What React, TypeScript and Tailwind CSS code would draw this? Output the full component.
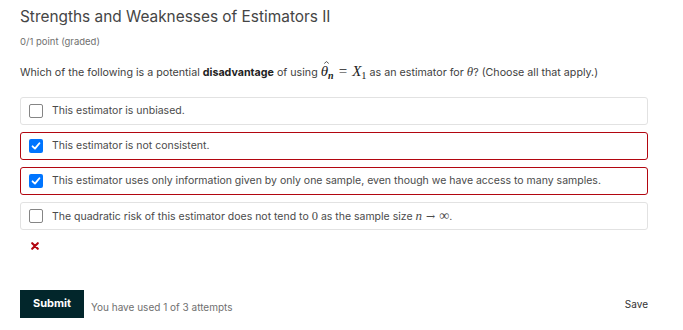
import React from "react";

type Option = {
  id: string;
  checked: boolean;
  label: React.ReactNode;
};

const serif = "font-['Liberation_Serif',serif]";

function Checkbox({ checked }: { checked: boolean }) {
  if (checked) {
    return (
      <span className="flex h-[14px] w-[14px] shrink-0 items-center justify-center rounded-[2px] bg-[#0075ff]">
        <svg viewBox="0 0 14 14" className="h-[12px] w-[12px]">
          <path
            d="M3 7.4 L5.8 10 L11 3.8"
            fill="none"
            stroke="#fff"
            strokeWidth="2.2"
            strokeLinecap="round"
            strokeLinejoin="round"
          />
        </svg>
      </span>
    );
  }
  return (
    <span className="h-[14px] w-[14px] shrink-0 rounded-[2px] border border-[#858585] bg-white" />
  );
}

const options: Option[] = [
  { id: "a", checked: false, label: "This estimator is unbiased." },
  { id: "b", checked: true, label: "This estimator is not consistent." },
  {
    id: "c",
    checked: true,
    label:
      "This estimator uses only information given by only one sample, even though we have access to many samples.",
  },
  {
    id: "d",
    checked: false,
    label: (
      <>
        The quadratic risk of this estimator does not tend to{" "}
        <span className={`${serif} text-[12.5px]`}>0</span> as the sample size{" "}
        <span className={`${serif} text-[13px] italic`}>n</span>
        <span className="mx-[4px] font-['DejaVu_Serif',serif] text-[11px]">→</span>
        <span className={`${serif} text-[14px]`}>∞</span>.
      </>
    ),
  },
];

function Estimator() {
  return (
    <span className={`${serif} text-[15px] leading-[14px] text-[#222]`}>
      <span className="relative inline-block italic">
        θ
        {/* hat accent */}
        <svg
          viewBox="0 0 6 3"
          className="absolute left-[3px] top-[-3px] h-[3px] w-[5px]"
        >
          <path d="M0.3 2.7 L3 0.4 L5.7 2.7" fill="none" stroke="#222" strokeWidth="0.9" />
        </svg>
      </span>
      <sub className="text-[10px] italic font-bold">n</sub>
      <span className="mx-[5px]">=</span>
      <span className="italic">X</span>
      <sub className="text-[10.5px]">1</sub>
    </span>
  );
}

export default function App() {
  return (
    <div className="min-h-[330px] bg-white font-['Inter',sans-serif]">
      <div className="w-[628px] ml-[20px] pt-[8px]">
        <h2 className="text-[15.4px] leading-[18px] font-normal text-[#454545]">
          Strengths and Weaknesses of Estimators II
        </h2>
        <div className="mt-[10px] text-[9.5px] leading-[12px] text-[#707070]">
          0/1 point (graded)
        </div>

        <p className="mt-[16px] text-[10.7px] leading-[16px] text-[#414141]">
          Which of the following is a potential{" "}
          <strong className="font-bold text-[#222]">disadvantage</strong> of
          using <Estimator /> as an estimator for{" "}
          <span className={`${serif} text-[13px] italic`}>θ</span>? (Choose all
          that apply.)
        </p>

        <div className="mt-[16px] flex flex-col gap-[7px]">
          {options.map((opt) => (
            <label
              key={opt.id}
              className={`flex h-[28px] items-center gap-[9px] rounded-[3px] border pl-[8px] ${
                opt.checked ? "border-[#b20610]" : "border-[#e2e2e2]"
              }`}
            >
              <Checkbox checked={opt.checked} />
              <span className="text-[10.5px] leading-[14px] text-[#4a4a4a]">
                {opt.label}
              </span>
            </label>
          ))}
        </div>

        <div className="mt-[12px] pl-[11px]">
          <svg viewBox="0 0 10 10" className="h-[8px] w-[8px]">
            <path
              d="M1.5 1.5 L8.5 8.5 M8.5 1.5 L1.5 8.5"
              stroke="#b20610"
              strokeWidth="2.6"
              strokeLinecap="round"
            />
          </svg>
        </div>

        <div className="mt-[40px] flex items-center">
          <button className="h-[28px] w-[64px] bg-[#02262b] pb-[2px] text-[11px] font-bold text-white">
            Submit
          </button>
          <span className="ml-[7px] mt-[6px] text-[10px] text-[#707070]">
            You have used 1 of 3 attempts
          </span>
          <span className="ml-auto text-[10px] text-[#333]">Save</span>
        </div>
      </div>
    </div>
  );
}
